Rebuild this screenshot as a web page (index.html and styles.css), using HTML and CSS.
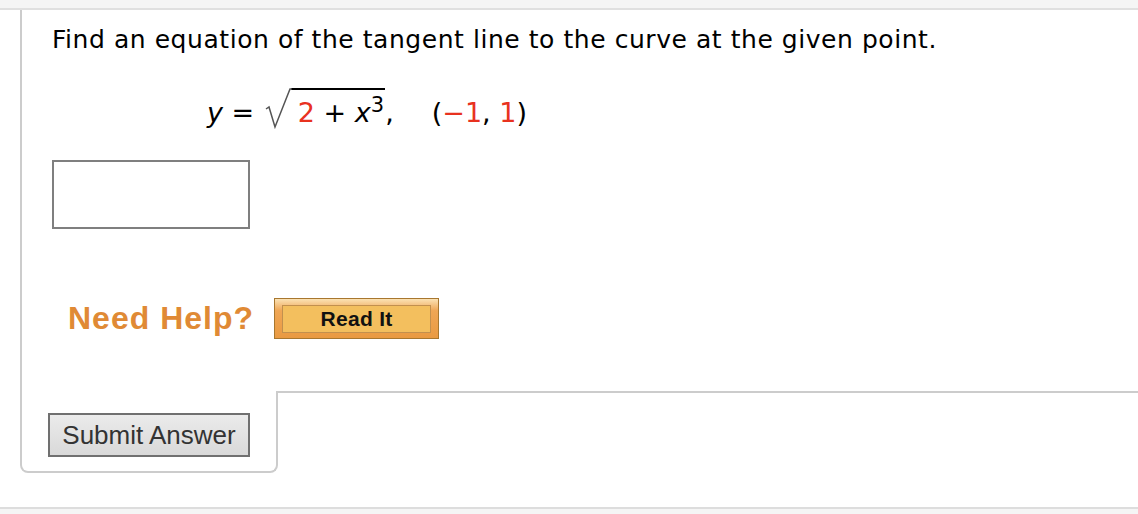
FILE: index.html
```html
<!DOCTYPE html>
<html>
<head>
<meta charset="utf-8">
<link rel="stylesheet" href="styles.css">
</head>
<body>
<div class="topbar"></div>
<div class="panel">
  <div class="content">
    <p class="prompt">Find an equation of the tangent line to the curve at the given point.</p>
    <div class="equation">
      <i class="var">y</i> = <span class="radical"><svg class="radsign" width="27" height="42" viewBox="0 0 27 42"><polyline points="1,21 4,19 10,39 25,1 27,1" fill="none" stroke="#555" stroke-width="1.5" stroke-linejoin="miter"/></svg><span class="radicand"><span class="red">2</span> + <i>x</i><sup>3</sup></span></span>,<span class="point">(<span class="red">&minus;1</span>, <span class="red">1</span>)</span>
    </div>
    <div class="answer-box"></div>
    <div class="help-row">
      <span class="need-help">Need Help?</span>
      <span class="read-it"><span class="read-it-inner">Read It</span></span>
    </div>
  </div>
  <div class="footer-row">
    <div class="submit-cell">
      <button class="submit">Submit Answer</button>
    </div>
    <div class="rest"></div>
  </div>
</div>
<div class="bottombar"></div>
</body>
</html>
```

FILE: styles.css
```css
html, body {
  margin: 0;
  padding: 0;
  background: #ffffff;
}

body {
  width: 1138px;
  height: 514px;
  overflow: hidden;
  font-family: "DejaVu Sans", Verdana, sans-serif;
  color: #000;
}

.topbar {
  height: 8px;
  background: #f5f5f5;
  border-bottom: 2px solid #e0e0e0;
}

.panel {
  margin-left: 20px;
}

.content {
  border-left: 2px solid #cccccc;
  padding: 16px 0 52px 30px;
}

.prompt {
  margin: 0;
  font-size: 25px;
  letter-spacing: 0.55px;
  line-height: 28px;
}

.equation {
  margin-top: 34px;
  margin-left: 155px;
  font-size: 27px;
  line-height: 46px;
  height: 48px;
  white-space: nowrap;
}

.var {
  font-style: italic;
}

.radical {
  display: inline-block;
  position: relative;
  margin-left: 2px;
  padding-left: 26px;
}

.radsign {
  position: absolute;
  left: 0;
  top: 0;
}

.radicand {
  display: inline-block;
  border-top: 2px solid #000;
  line-height: 46px;
  padding: 0 1px 0 7px;
}

.radicand sup {
  font-size: 21px;
  line-height: 0;
  vertical-align: 10px;
}

.red {
  color: #e8321f;
}

.point {
  margin-left: 38px;
}

.answer-box {
  margin-top: 24px;
  width: 194px;
  height: 65px;
  border: 2px solid #7f7f7f;
}

.help-row {
  display: flex;
  align-items: center;
  gap: 20px;
  margin-top: 69px;
  padding-left: 16px;
}

.need-help {
  font-family: "Liberation Sans", Arial, sans-serif;
  font-weight: bold;
  font-size: 32px;
  letter-spacing: 1px;
  color: #e08a35;
}

.read-it {
  display: block;
  width: 149px;
  height: 28px;
  padding: 6px 7px 5px 7px;
  border: 1px solid #a8772f;
  background: linear-gradient(#fbe2b4 0%, #efa655 30%, #e99a42 100%);
}

.read-it-inner {
  display: flex;
  align-items: center;
  justify-content: center;
  box-sizing: border-box;
  height: 28px;
  border: 1px solid #c2904e;
  background: #f3bf5e;
  font-family: "Liberation Sans", Arial, sans-serif;
  font-weight: bold;
  font-size: 21px;
  letter-spacing: 0.3px;
  color: #111;
}

.footer-row {
  display: flex;
}

.submit-cell {
  box-sizing: border-box;
  width: 258px;
  padding: 22px 0 14px 26px;
  border-left: 2px solid #cccccc;
  border-right: 2px solid #cccccc;
  border-bottom: 2px solid #cccccc;
  border-radius: 0 0 8px 8px;
}

.submit {
  display: block;
  width: 202px;
  height: 44px;
  margin: 0;
  padding: 0;
  border: 2px solid #707070;
  background: linear-gradient(#ebebeb, #d9d9d9);
  font-family: "Liberation Sans", Arial, sans-serif;
  font-size: 26px;
  color: #333;
}

.rest {
  flex: 1;
  margin-left: -2px;
  border-top: 2px solid #cccccc;
}

.bottombar {
  margin-top: 34px;
  height: 10px;
  background: #f5f5f5;
  border-top: 2px solid #dddddd;
}
```
